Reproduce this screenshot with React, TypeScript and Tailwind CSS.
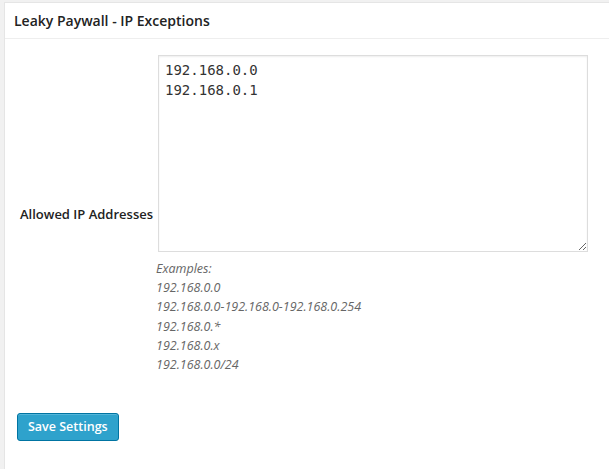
import { useState } from "react";

const examples = [
  "192.168.0.0",
  "192.168.0.0-192.168.0-192.168.0.254",
  "192.168.0.*",
  "192.168.0.x",
  "192.168.0.0/24",
];

export default function App() {
  const [ips, setIps] = useState("192.168.0.0\n192.168.0.1");

  return (
    <div className="min-h-screen bg-[#f1f1f1] pl-[4px] pt-[2px] font-['Open_Sans',sans-serif] text-[#222]">
      <div className="min-h-[467px] border-l border-t border-[#e5e5e5] bg-white">
        {/* header */}
        <div className="flex h-[36px] items-center border-b border-[#eee] px-[9px]">
          <h3 className="text-[14px] font-semibold">Leaky Paywall - IP Exceptions</h3>
        </div>

        <div className="px-[12px] pt-[16px]">
          <div className="flex items-center">
            <label className="w-[141px] pl-[3px] text-[13px] font-semibold">Allowed IP Addresses</label>
            <div>
              <textarea
                value={ips}
                onChange={(e) => setIps(e.target.value)}
                className="block h-[197px] w-[430px] border border-[#ddd] bg-white px-[6px] py-[4px] font-['DejaVu_Sans_Mono',monospace] text-[14px] leading-[20px] text-[#333] shadow-[inset_0_1px_2px_rgba(0,0,0,0.07)] outline-none"
              />
              <div className="-ml-[2px] mt-[7px] text-[12.5px] italic leading-[19.2px] text-[#666]">
                <div>Examples:</div>
                {examples.map((ex) => (
                  <div key={ex}>{ex}</div>
                ))}
              </div>
            </div>
          </div>

          <button className="mt-[39px] h-[28px] rounded-[3px] border border-[#0074a2] bg-[#2ea2cc] px-[10px] text-[12.5px] font-semibold text-white shadow-[inset_0_1px_0_rgba(120,200,230,0.5)]">
            Save Settings
          </button>
        </div>
      </div>
    </div>
  );
}
